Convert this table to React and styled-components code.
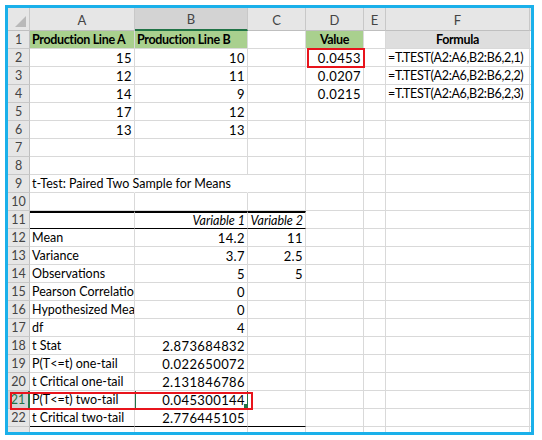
import React from "react";
import styled, { createGlobalStyle, css } from "styled-components";

const GlobalStyle = createGlobalStyle`
  html, body { margin: 0; padding: 0; background: #ffffff; }
  body { font-family: Lato, "Open Sans", sans-serif; }
`;

const Frame = styled.div`
  position: relative;
  margin: 5px;
  width: 523px;
  height: 424px;
  border: 3px solid #1ab0ea;
  overflow: hidden;
  background: #fff;
`;

const Sheet = styled.div`
  display: grid;
  grid-template-columns: 22px 105px 113px 58px 58px 22px 144px 1fr;
  grid-template-rows: 23px repeat(23, 18px);
  font-size: 12.5px;
  color: #000;
`;

const ColHead = styled.div`
  box-sizing: border-box;
  background: ${(p) => (p.$active ? "#d3d3d3" : "#e6e6e6")};
  border-right: 1px solid #c8c8c8;
  border-bottom: ${(p) => (p.$active ? "2px solid #217346" : "1px solid #bfbfbf")};
  color: #444;
  display: flex;
  align-items: center;
  justify-content: center;
  padding-top: 1px;
  font-size: 13px;
`;

const Corner = styled(ColHead)`
  position: relative;
  &::after {
    content: "";
    position: absolute;
    right: 3px;
    bottom: 3px;
    border-left: 11px solid transparent;
    border-bottom: 11px solid #b9b9b9;
  }
`;

const RowHead = styled.div`
  box-sizing: border-box;
  background: ${(p) => (p.$active ? "#d3d3d3" : "#e6e6e6")};
  border-right: ${(p) => (p.$active ? "2px solid #217346" : "1px solid #bfbfbf")};
  border-bottom: 1px solid #c8c8c8;
  color: ${(p) => (p.$active ? "#217346" : "#444")};
  display: flex;
  align-items: center;
  justify-content: center;
  font-size: 12.5px;
`;

const spacing = {
  text: "0",
  num: "0.4px",
  bold: "-0.35px",
  formula: "-0.3px",
};

const Cell = styled.div`
  box-sizing: border-box;
  position: relative;
  border-right: 1px solid ${(p) => (p.$noRight ? "transparent" : "#d9d9d9")};
  border-bottom: 1px solid #d9d9d9;
  background: ${(p) => p.$fill || "transparent"};
  display: flex;
  align-items: center;
  justify-content: ${(p) =>
    p.$align === "right" ? "flex-end" : p.$align === "center" ? "center" : "flex-start"};
  padding: 0 2px 0 2px;
  white-space: nowrap;
  overflow: ${(p) => (p.$spill ? "visible" : "hidden")};
  font-size: ${(p) => (p.$kind === "num" ? "13px" : "12.5px")};
  letter-spacing: ${(p) => spacing[p.$kind] || "0"};
  font-weight: ${(p) => (p.$kind === "bold" ? 700 : 400)};
  font-style: ${(p) => (p.$italic ? "italic" : "normal")};
  ${(p) => p.$topThick && css`border-top: 2px solid #000;`}
  ${(p) => p.$bottomLine && css`border-bottom: 1px solid #000;`}
  ${(p) =>
    p.$selected &&
    css`
      border-left: 1px solid #217346;
      border-right: 1px solid #217346;
      &::after {
        content: "";
        position: absolute;
        right: -1px;
        bottom: 0;
        width: 4px;
        height: 4px;
        background: #217346;
      }
    `}
`;

const Mark = styled.div`
  position: absolute;
  border: 2px solid #e8141c;
  box-sizing: border-box;
  pointer-events: none;
`;

const GREEN = "#a9d08e";
const GRAY = "#dedede";

const cols = ["A", "B", "C", "D", "E", "F"];

const n = (v, extra = {}) => ({ v, kind: "num", align: "right", ...extra });
const t = (v, extra = {}) => ({ v, kind: "text", ...extra });
const f = (v) => ({ v, kind: "formula" });

const rows = [
  [
    { v: "Production Line A", kind: "bold", fill: GREEN },
    { v: "Production Line B", kind: "bold", fill: GREEN },
    {},
    { v: "Value", kind: "bold", fill: GREEN, align: "center" },
    {},
    { v: "Formula", kind: "bold", fill: GRAY, align: "center" },
  ],
  [n("15"), n("10"), {}, n("0.0453"), {}, f("=T.TEST(A2:A6,B2:B6,2,1)")],
  [n("12"), n("11"), {}, n("0.0207"), {}, f("=T.TEST(A2:A6,B2:B6,2,2)")],
  [n("14"), n("9"), {}, n("0.0215"), {}, f("=T.TEST(A2:A6,B2:B6,2,3)")],
  [n("17"), n("12")],
  [n("13"), n("13")],
  [],
  [],
  [t("t-Test: Paired Two Sample for Means", { spill: true, noRight: true }), { noRight: true }],
  [],
  [
    { top: true, bline: true },
    t("Variable 1", { italic: true, align: "right", top: true, bline: true }),
    t("Variable 2", { italic: true, align: "right", top: true, bline: true }),
  ],
  [t("Mean"), n("14.2"), n("11")],
  [t("Variance"), n("3.7"), n("2.5")],
  [t("Observations"), n("5"), n("5")],
  [t("Pearson Correlation"), n("0")],
  [t("Hypothesized Mean Difference"), n("0")],
  [t("df"), n("4")],
  [t("t Stat"), n("2.873684832")],
  [t("P(T<=t) one-tail"), n("0.022650072")],
  [t("t Critical one-tail"), n("2.131846786")],
  [t("P(T<=t) two-tail"), n("0.045300144", { selected: true })],
  [t("t Critical two-tail", { bline: true }), n("2.776445105", { bline: true }), { bline: true }],
  [],
];

export default function App() {
  return (
    <>
      <GlobalStyle />
      <Frame>
        <Sheet>
          <Corner />
          {cols.map((c) => (
            <ColHead key={c} $active={c === "B"}>{c}</ColHead>
          ))}
          <ColHead />
          {rows.map((r, i) => (
            <React.Fragment key={i}>
              <RowHead $active={i === 20}>{i < 22 ? i + 1 : ""}</RowHead>
              {cols.map((c, j) => {
                const d = r[j] || {};
                return (
                  <Cell
                    key={c}
                    $kind={d.kind}
                    $fill={d.fill}
                    $italic={d.italic}
                    $align={d.align || "left"}
                    $spill={d.spill}
                    $noRight={d.noRight}
                    $topThick={d.top}
                    $bottomLine={d.bline}
                    $selected={d.selected}
                  >
                    {d.v}
                  </Cell>
                );
              })}
              <Cell />
            </React.Fragment>
          ))}
        </Sheet>
        <Mark style={{ left: 299, top: 40, width: 58, height: 20 }} />
        <Mark style={{ left: 2, top: 384, width: 243, height: 18 }} />
      </Frame>
    </>
  );
}
